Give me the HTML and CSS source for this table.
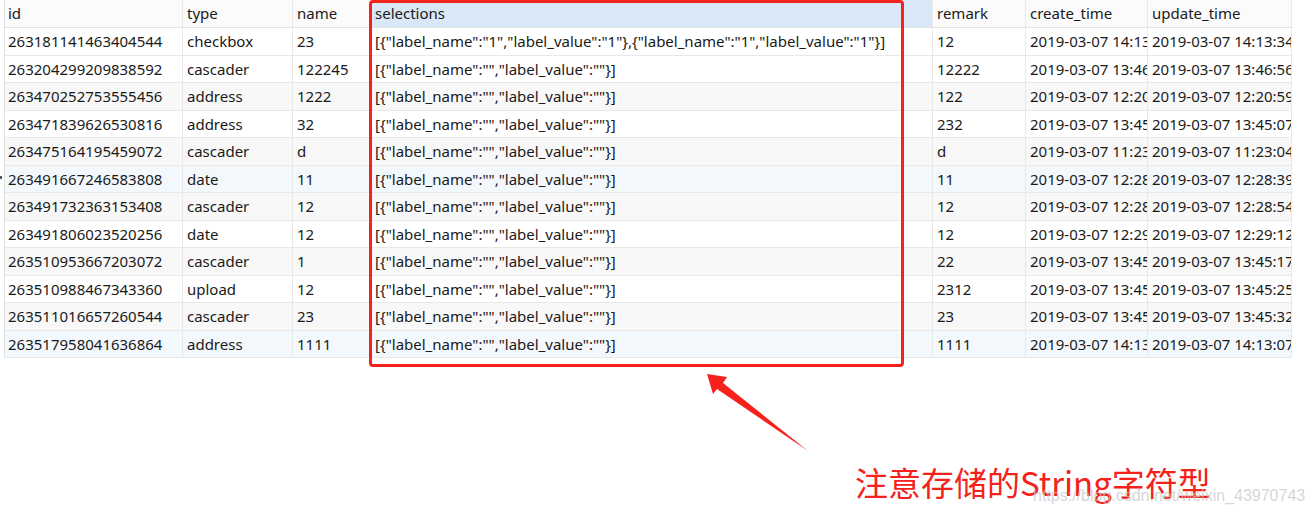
FILE: index.html
```html
<!DOCTYPE html>
<html lang="zh">
<head>
<meta charset="utf-8">
<title>selections</title>
<link rel="stylesheet" href="styles.css">
</head>
<body>
<div class="page">
  <div class="grid">
    <div class="row head">
      <div class="cell">id</div><div class="cell">type</div><div class="cell">name</div><div class="cell sel">selections</div><div class="cell">remark</div><div class="cell">create_time</div><div class="cell">update_time</div>
    </div>
    <div class="row">
      <div class="cell">263181141463404544</div><div class="cell">checkbox</div><div class="cell">23</div><div class="cell">[{"label_name":"1","label_value":"1"},{"label_name":"1","label_value":"1"}]</div><div class="cell">12</div><div class="cell">2019-03-07 14:13:34</div><div class="cell">2019-03-07 14:13:34</div>
    </div>
    <div class="row">
      <div class="cell">263204299209838592</div><div class="cell">cascader</div><div class="cell">122245</div><div class="cell">[{"label_name":"","label_value":""}]</div><div class="cell">12222</div><div class="cell">2019-03-07 13:46:56</div><div class="cell">2019-03-07 13:46:56</div>
    </div>
    <div class="row alt">
      <div class="cell">263470252753555456</div><div class="cell">address</div><div class="cell">1222</div><div class="cell">[{"label_name":"","label_value":""}]</div><div class="cell">122</div><div class="cell">2019-03-07 12:20:59</div><div class="cell">2019-03-07 12:20:59</div>
    </div>
    <div class="row">
      <div class="cell">263471839626530816</div><div class="cell">address</div><div class="cell">32</div><div class="cell">[{"label_name":"","label_value":""}]</div><div class="cell">232</div><div class="cell">2019-03-07 13:45:07</div><div class="cell">2019-03-07 13:45:07</div>
    </div>
    <div class="row alt">
      <div class="cell">263475164195459072</div><div class="cell">cascader</div><div class="cell">d</div><div class="cell">[{"label_name":"","label_value":""}]</div><div class="cell">d</div><div class="cell">2019-03-07 11:23:04</div><div class="cell">2019-03-07 11:23:04</div>
    </div>
    <div class="row cur">
      <div class="cell">263491667246583808</div><div class="cell">date</div><div class="cell">11</div><div class="cell">[{"label_name":"","label_value":""}]</div><div class="cell">11</div><div class="cell">2019-03-07 12:28:39</div><div class="cell">2019-03-07 12:28:39</div>
    </div>
    <div class="row alt">
      <div class="cell">263491732363153408</div><div class="cell">cascader</div><div class="cell">12</div><div class="cell">[{"label_name":"","label_value":""}]</div><div class="cell">12</div><div class="cell">2019-03-07 12:28:54</div><div class="cell">2019-03-07 12:28:54</div>
    </div>
    <div class="row">
      <div class="cell">263491806023520256</div><div class="cell">date</div><div class="cell">12</div><div class="cell">[{"label_name":"","label_value":""}]</div><div class="cell">12</div><div class="cell">2019-03-07 12:29:12</div><div class="cell">2019-03-07 12:29:12</div>
    </div>
    <div class="row alt">
      <div class="cell">263510953667203072</div><div class="cell">cascader</div><div class="cell">1</div><div class="cell">[{"label_name":"","label_value":""}]</div><div class="cell">22</div><div class="cell">2019-03-07 13:45:17</div><div class="cell">2019-03-07 13:45:17</div>
    </div>
    <div class="row">
      <div class="cell">263510988467343360</div><div class="cell">upload</div><div class="cell">12</div><div class="cell">[{"label_name":"","label_value":""}]</div><div class="cell">2312</div><div class="cell">2019-03-07 13:45:25</div><div class="cell">2019-03-07 13:45:25</div>
    </div>
    <div class="row alt">
      <div class="cell">263511016657260544</div><div class="cell">cascader</div><div class="cell">23</div><div class="cell">[{"label_name":"","label_value":""}]</div><div class="cell">23</div><div class="cell">2019-03-07 13:45:32</div><div class="cell">2019-03-07 13:45:32</div>
    </div>
    <div class="row cur">
      <div class="cell">263517958041636864</div><div class="cell">address</div><div class="cell">1111</div><div class="cell">[{"label_name":"","label_value":""}]</div><div class="cell">1111</div><div class="cell">2019-03-07 14:13:07</div><div class="cell">2019-03-07 14:13:07</div>
    </div>
  </div>

  <div class="marker"></div>
  <div class="redbox"></div>
  <svg class="arrow" width="120" height="100" viewBox="700 368 120 100" xmlns="http://www.w3.org/2000/svg">
    <polygon points="707,374 727,377 723,383 808,451 717,389 713,394" fill="#f5221b"/>
  </svg>
  <div class="note">
    <span class="note-text">注意存储的String字符型</span>
    <span class="watermark">https://blog.csdn.net/weixin_43970743</span>
  </div>
</div>
</body>
</html>
```

FILE: styles.css
```css
html, body {
  margin: 0;
  padding: 0;
  background: #ffffff;
}
body {
  font-family: "Noto Sans", "Noto Sans CJK SC", sans-serif;
  font-size: 15px;
  color: #1a1a1a;
}
.page {
  position: relative;
  width: 1313px;
  height: 515px;
  overflow: hidden;
}
.grid {
  margin-left: 4px;
  width: 1287px;
  border-left: 1px solid #e2e2e2;
}
.row {
  display: grid;
  grid-template-columns: 178px 110px 78px 562px 93px 122px 144px;
  height: 27.5px;
  box-sizing: border-box;
  border-bottom: 1px solid #e8e8e8;
  background: #ffffff;
}
.row.head {
  height: 28px;
  background: #fbfbfb;
  border-bottom: 1px solid #e2e2e2;
}
.row.alt {
  background: #f8f8f8;
}
.row.cur {
  background: #f3f8fd;
}
.cell {
  padding: 0 4px;
  line-height: 27px;
  white-space: nowrap;
  overflow: hidden;
  border-right: 1px solid #e8e8e8;
  min-width: 0;
}
.cell:first-child {
  padding-left: 3px;
}
.head .cell.sel {
  background: #d8e8f6;
}
.marker {
  position: absolute;
  left: 0;
  top: 176px;
  width: 2px;
  height: 3px;
  background: #555;
}
.redbox {
  position: absolute;
  left: 369px;
  top: 0;
  width: 535px;
  height: 367px;
  box-sizing: border-box;
  border: 3px solid #f5221b;
  border-radius: 4px;
}
.arrow {
  position: absolute;
  left: 700px;
  top: 368px;
}
.note {
  position: absolute;
  left: 855px;
  top: 458px;
  width: 458px;
  height: 57px;
}
.note-text {
  position: absolute;
  left: 0;
  top: 0;
  font-family: "Noto Sans CJK SC", sans-serif;
  font-size: 33px;
  line-height: 48px;
  color: #f5221b;
  white-space: nowrap;
}
.watermark {
  position: absolute;
  left: 178px;
  top: 28px;
  font-family: "Liberation Sans", sans-serif;
  font-size: 16px;
  line-height: 20px;
  color: rgba(195, 195, 195, 0.7);
  white-space: nowrap;
}
```
